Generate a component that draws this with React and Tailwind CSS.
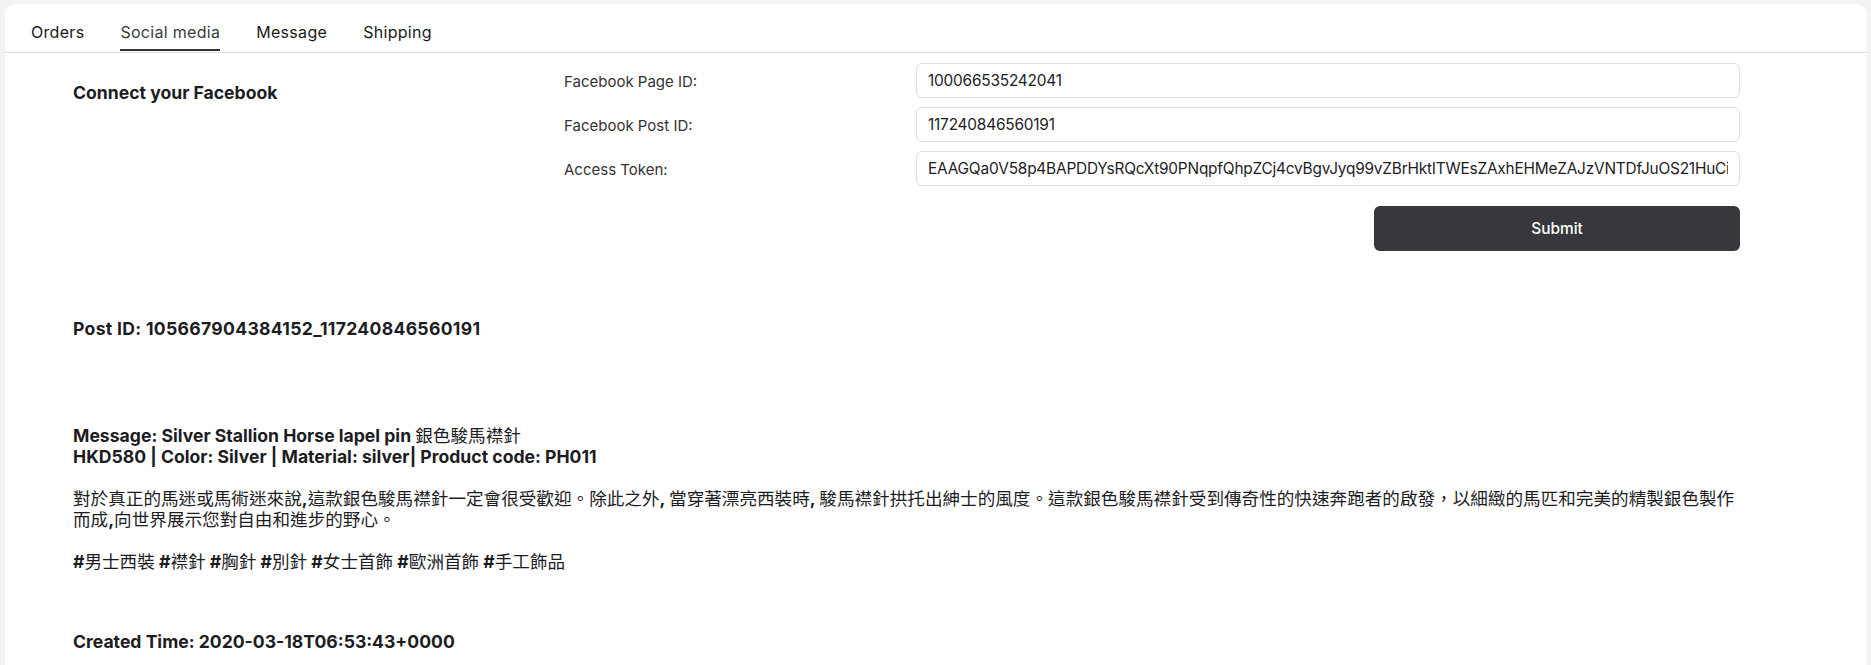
import { useState } from "react"

const CJK = /([\u2E80-\u9FFF\u3000-\u303F\uFF00-\uFFEF]+)/

// bold run where the CJK glyphs stay regular, like the original page
const Mixed = ({ text }) =>
  text
    .split(CJK)
    .filter(Boolean)
    .map((part, i) =>
      CJK.test(part) ? (
        <span key={i} className="font-normal">
          {part}
        </span>
      ) : (
        <span key={i}>{part}</span>
      )
    )

const tabs = ["Orders", "Social media", "Message", "Shipping"]

const fields = [
  { label: "Facebook Page ID:", value: "100066535242041" },
  { label: "Facebook Post ID:", value: "117240846560191" },
  {
    label: "Access Token:",
    value:
      "EAAGQa0V58p4BAPDDYsRQcXt90PNqpfQhpZCj4cvBgvJyq99vZBrHktITWEsZAxhEHMeZAJzVNTDfJuOS21HuCi",
  },
]

const messageLines = [
  "Message: Silver Stallion Horse lapel pin 銀色駿馬襟針",
  "HKD580 | Color: Silver | Material: silver| Product code: PH011",
  "",
  "對於真正的馬迷或馬術迷來說,這款銀色駿馬襟針一定會很受歡迎。除此之外, 當穿著漂亮西裝時, 駿馬襟針拱托出紳士的風度。這款銀色駿馬襟針受到傳奇性的快速奔跑者的啟發，以細緻的馬匹和完美的精製銀色製作",
  "而成,向世界展示您對自由和進步的野心。",
  "",
  "#男士西裝 #襟針 #胸針 #別針 #女士首飾 #歐洲首飾 #手工飾品",
]

const App = () => {
  const [active, setActive] = useState(1)
  const [values, setValues] = useState(fields.map((f) => f.value))

  return (
    <div className="min-h-screen bg-[#f3f3f3] pl-[5px] pr-[4px] pt-[4px] font-['Inter','Noto_Sans_CJK_TC',sans-serif] text-[#1d1d1f]">
      <div className="min-h-[700px] rounded-t-[10px] bg-white">
        {/* Tabs */}
        <div className="flex h-[49px] items-end gap-[36px] border-b border-[#dedede] pl-[26px]">
          {tabs.map((tab, i) => (
            <button
              key={tab}
              onClick={() => setActive(i)}
              className={`mb-[1px] border-b-2 pb-[7px] text-[16px] leading-[20px] tracking-[0.3px] ${
                active === i ? "border-[#333336] text-[#3a3a3c]" : "border-transparent text-[#1a1a1a]"
              }`}
            >
              {tab}
            </button>
          ))}
        </div>

        <div className="ml-[68px] w-[1667px]">
          {/* Connect form */}
          <div className="flex pt-[10px]">
            <div className="w-[491px] pt-[19px]">
              <h3 className="text-[17.6px] font-bold leading-[21px] text-[#1d1d1f]">Connect your Facebook</h3>
            </div>
            <div className="flex-1">
              <div className="grid grid-cols-[352px_1fr] gap-y-[9px]">
                {fields.map((f, i) => (
                  <div key={f.label} className="contents">
                    <label className="flex h-[35px] items-center pt-[3px] text-[15px] text-[#333]">{f.label}</label>
                    <input
                      value={values[i]}
                      onChange={(e) => {
                        const next = [...values]
                        next[i] = e.target.value
                        setValues(next)
                      }}
                      className="h-[35px] w-full rounded-[6px] border border-[#dfdfdf] bg-white px-[11px] text-[15.4px] tracking-[-0.2px] text-[#1d1d1f] outline-none"
                    />
                  </div>
                ))}
              </div>
              <div className="mt-[20px] flex justify-end">
                <button className="h-[45px] w-[366px] rounded-[6px] bg-[#37373c] text-[15.4px] font-medium text-white">
                  Submit
                </button>
              </div>
            </div>
          </div>

          {/* Post details */}
          <div className="mt-[67px] text-[17.6px] font-bold leading-[21px] tracking-[0.3px]">
            Post ID: 105667904384152_117240846560191
          </div>

          <div className="mt-[86px] text-[17.6px] font-bold leading-[21px]">
            {messageLines.map((line, i) => (
              <div key={i} className="h-[21px] whitespace-nowrap">
                <Mixed text={line} />
              </div>
            ))}
          </div>

          <div className="mt-[59px] text-[17.6px] font-bold leading-[21px]">
            Created Time: 2020-03-18T06:53:43+0000
          </div>
        </div>
      </div>
    </div>
  )
}

export default App
